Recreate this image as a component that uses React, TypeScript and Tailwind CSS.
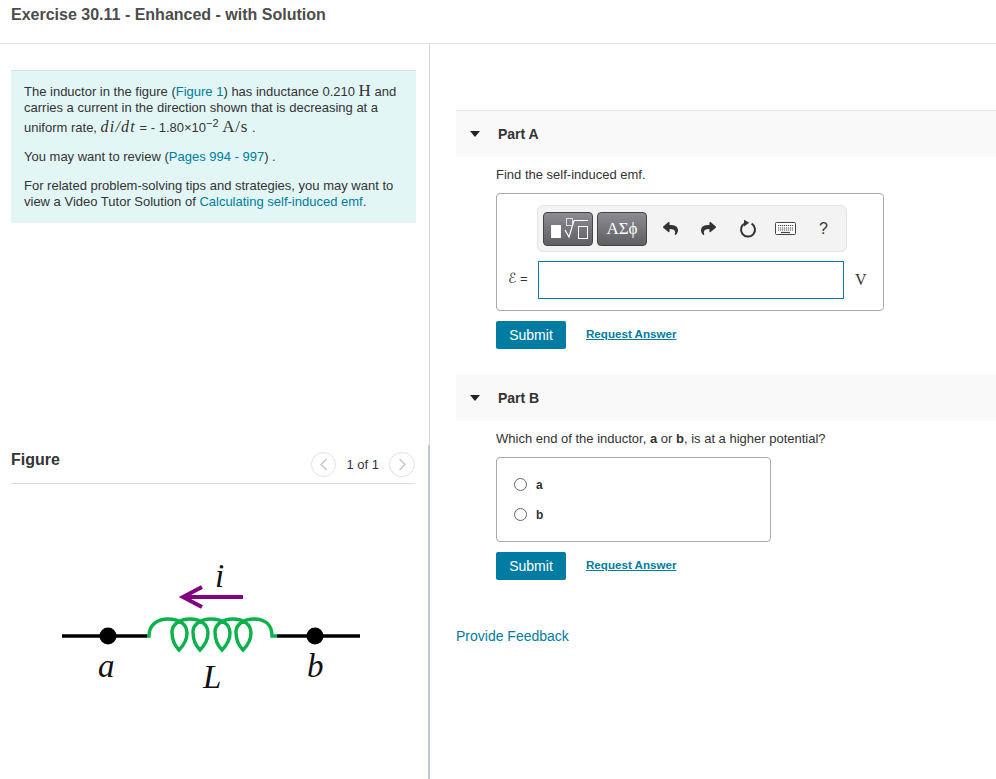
import { FaReply, FaShare } from "react-icons/fa";

const link = "text-[#007c9e]";
const math = "font-['Liberation_Serif','Times_New_Roman',serif]";

function Caret() {
  return <span className="w-0 h-0 border-x-[5.5px] border-x-transparent border-t-[6px] border-t-[#222]" />;
}

function PartHeader({ label }: { label: string }) {
  return (
    <div className="flex items-center h-[46px] bg-[#f9f9f9] pl-[14px] gap-[18px]">
      <Caret />
      <span className="font-bold text-[14px] text-[#333]">{label}</span>
    </div>
  );
}

function Actions() {
  return (
    <div className="flex items-center gap-5 ml-10">
      <button className="w-[70px] h-[28px] bg-[#007ca3] rounded-[2px] text-white text-[14px] flex items-center justify-center">Submit</button>
      <span className="text-[11.6px] font-bold underline text-[#007c9e] -mt-[2px]">Request Answer</span>
    </div>
  );
}

function Figure() {
  const coil =
    "M147 636 H149 C149 625 157 619 168 619 C179 619 187 624 187 633 C187 640 183 646 179 650 C175 646 172 640 172 632 C172 624 180 619 190 619 C200 619 208 624 208 633 C208 640 204 646 200 650 C196 646 193 640 193 632 C193 624 201 619 211 619 C222 619 230 624 230 633 C230 640 226 646 222 650 C218 646 215 640 215 632 C215 624 223 619 233 619 C243 619 251 624 251 633 C251 640 247 646 243 650 C239 646 236 640 236 632 C236 624 244 619 254 619 C265 619 272 625 272 636 H277";
  return (
    <svg className="block" width="428" height="295" viewBox="0 484 428 295">
      <line x1="62" y1="636" x2="147" y2="636" stroke="#000" strokeWidth="3.5" />
      <line x1="277" y1="636" x2="360" y2="636" stroke="#000" strokeWidth="3.5" />
      <circle cx="108" cy="636" r="8.5" fill="#000" />
      <circle cx="315" cy="636" r="8.5" fill="#000" />
      <path d={coil} fill="none" stroke="#0bb14b" strokeWidth="3.4" />
      <line x1="243" y1="597" x2="186" y2="597" stroke="#800080" strokeWidth="4" />
      <path d="M202 587 L183 597 L202 607" fill="none" stroke="#800080" strokeWidth="4" />
      <g fontFamily="'Liberation Serif', serif" fontStyle="italic" fontSize="33" fill="#111">
        <text x="215" y="587">i</text>
        <text x="98" y="677">a</text>
        <text x="203" y="688">L</text>
        <text x="307" y="677">b</text>
      </g>
    </svg>
  );
}

export default function App() {
  return (
    <div className="w-[996px] h-[779px] overflow-hidden bg-white font-['Liberation_Sans',Arial,sans-serif] text-[13px] leading-4 text-[#333] flex flex-col">
      <header className="h-[44px] shrink-0 border-b border-[#dcdfe3] pl-[11px] pt-[6px]">
        <h1 className="text-[16px] leading-[17px] font-bold text-[#4c4c4c]">Exercise 30.11 - Enhanced - with Solution</h1>
      </header>
      <div className="flex flex-1 min-h-0">
        <aside className="w-[430px] shrink-0 flex flex-col">
          <div className="h-[401px] shrink-0 border-r border-[#d5d9de] pl-[11px] pr-[13px] pt-[26px]">
            <div className="bg-[#e2f6f6] border-t border-[#d5e2e4] h-[153px] pl-[13px] pr-[10px] pt-[12px]">
              <p>
                The inductor in the figure (<span className={link}>Figure 1</span>) has inductance 0.210 <span className={`${math} text-[17px] leading-4`}>H</span> and carries a current in the direction shown that is decreasing at a
                <span className="block mt-[3px]">
                  uniform rate, <span className={`${math} italic text-[16px] leading-4 tracking-[1.2px]`}>di/dt</span> = - 1.80×10<span className="relative -top-[5px] text-[11px] leading-none">−2</span> <span className={`${math} text-[17px] leading-4 tracking-[0.8px]`}>A/s</span> .
                </span>
              </p>
              <p className="mt-[13px]">You may want to review (<span className={link}>Pages 994 - 997</span>) .</p>
              <p className="mt-[13px]">For related problem-solving tips and strategies, you may want to view a Video Tutor Solution of <span className={link}>Calculating self-induced emf</span>.</p>
            </div>
          </div>
          <div className="flex-1 min-h-0 border-r-2 border-[#b9cadd]">
            <div className="ml-[11px] mr-[13px] h-[39px] border-b border-[#dcdcdc] flex items-center">
              <span className="font-bold text-[16px] text-[#333] flex-1 -mt-[9px]">Figure</span>
              <div className="flex items-center gap-[10px] mt-[1px] text-[13px]">
                <span className="w-[25px] h-[25px] rounded-full border border-[#e2e2e2] flex items-center justify-center text-[#c4c4c4]">
                  <svg width="9" height="13" viewBox="0 0 9 13" fill="none" stroke="currentColor" strokeWidth="1.4"><path d="M7.5 1 L2 6.5 L7.5 12" /></svg>
                </span>
                <span>1 of 1</span>
                <span className="w-[26px] h-[25px] rounded-full border border-[#e2e2e2] flex items-center justify-center text-[#c4c4c4]">
                  <svg width="9" height="13" viewBox="0 0 9 13" fill="none" stroke="currentColor" strokeWidth="1.4"><path d="M1.5 1 L7 6.5 L1.5 12" /></svg>
                </span>
              </div>
            </div>
            <Figure />
          </div>
        </aside>
        <main className="flex-1 min-w-0 pl-[26px] pt-[66px]">
          <div className="border-t border-[#e6e6e6]"><PartHeader label="Part A" /></div>
          <p className="ml-10 mt-[10px]">Find the self-induced emf.</p>
          <div className="ml-10 mt-[10px] w-[388px] h-[118px] border border-[#aaa] rounded-[4px] flex flex-col pt-[11px] pl-[40px]">
            <div className="w-[310px] h-[47px] bg-[#f3f3f3] border border-[#e3e3e3] rounded-[6px] flex items-center pl-[5px]">
              <span className="w-[50px] h-[34px] rounded-[4px] border border-[#444] bg-gradient-to-b from-[#8c8c92] to-[#5f5f64] flex items-center justify-center">
                <svg width="42" height="28" viewBox="0 0 42 28" fill="none" stroke="#fff">
                  <rect x="4" y="10" width="10" height="13" fill="#fff" stroke="none" />
                  <rect x="19.5" y="3.5" width="6" height="7" strokeWidth="1" opacity="0.75" />
                  <path d="M18 15 L22 22 L27 5.5 H41" strokeWidth="1.2" />
                  <rect x="31.5" y="11.5" width="9" height="12" strokeWidth="1" />
                </svg>
              </span>
              <span className={`${math} ml-[4px] w-[50px] h-[34px] rounded-[4px] border border-[#444] bg-gradient-to-b from-[#8c8c92] to-[#5f5f64] flex items-center justify-center text-white text-[17px]`}>ΑΣϕ</span>
              <span className="ml-[16px] w-[15px] flex justify-center text-[#333]"><FaReply size={15} /></span>
              <span className="ml-[23px] w-[15px] flex justify-center text-[#333]"><FaShare size={15} /></span>
              <span className="ml-[23px] w-[18px] flex justify-center">
                <svg width="18" height="20" viewBox="0 0 18 20" fill="none" stroke="#333" strokeWidth="2">
                  <path d="M12.6 4.6 A7 7 0 1 1 6 4.3" />
                  <path d="M5 0.8 L10.2 3.8 L5 7.6 Z" fill="#333" stroke="none" />
                </svg>
              </span>
              <span className="ml-[17px] w-[22px] flex justify-center">
                <svg width="21" height="13" viewBox="0 0 21 13" fill="none" stroke="#444">
                  <rect x="0.5" y="0.5" width="20" height="12" rx="1" fill="#fff" />
                  <path d="M3 3.5 H18 M3 6 H18 M3 8 H18" strokeDasharray="1.2 0.8" strokeWidth="1.2" />
                  <path d="M6 10.5 H15" strokeWidth="1.2" />
                </svg>
              </span>
              <span className="ml-[23px] text-[16px] text-[#333]">?</span>
            </div>
            <div className="flex items-center -ml-[29px] mt-[9px]">
              <span className="w-[30px] text-[13px] text-[#333] -mt-[3px]"><span className="font-['DejaVu_Sans',sans-serif] text-[14px]">ℰ</span> =</span>
              <span className="w-[306px] h-[38px] border border-[#007c9e] bg-white" />
              <span className={`${math} ml-[11px] text-[16px] text-[#333]`}>V</span>
            </div>
          </div>
          <div className="mt-[10px]"><Actions /></div>
          <div className="mt-[26px]"><PartHeader label="Part B" /></div>
          <p className="ml-10 mt-[10px]">Which end of the inductor, <b>a</b> or <b>b</b>, is at a higher potential?</p>
          <div className="ml-10 mt-[10px] w-[275px] h-[85px] border border-[#aaa] rounded-[4px] pl-[17px] pt-[19px] flex flex-col gap-[16px]">
            {["a", "b"].map((v) => (
              <div key={v} className="flex items-center h-[14px] gap-[9px]">
                <span className="w-[13px] h-[13px] rounded-full border border-[#666] bg-white" />
                <span className="font-bold text-[12px] mt-[1px]">{v}</span>
              </div>
            ))}
          </div>
          <div className="mt-[10px]"><Actions /></div>
          <p className={`${link} mt-[48px] text-[14px]`}>Provide Feedback</p>
        </main>
      </div>
    </div>
  );
}
